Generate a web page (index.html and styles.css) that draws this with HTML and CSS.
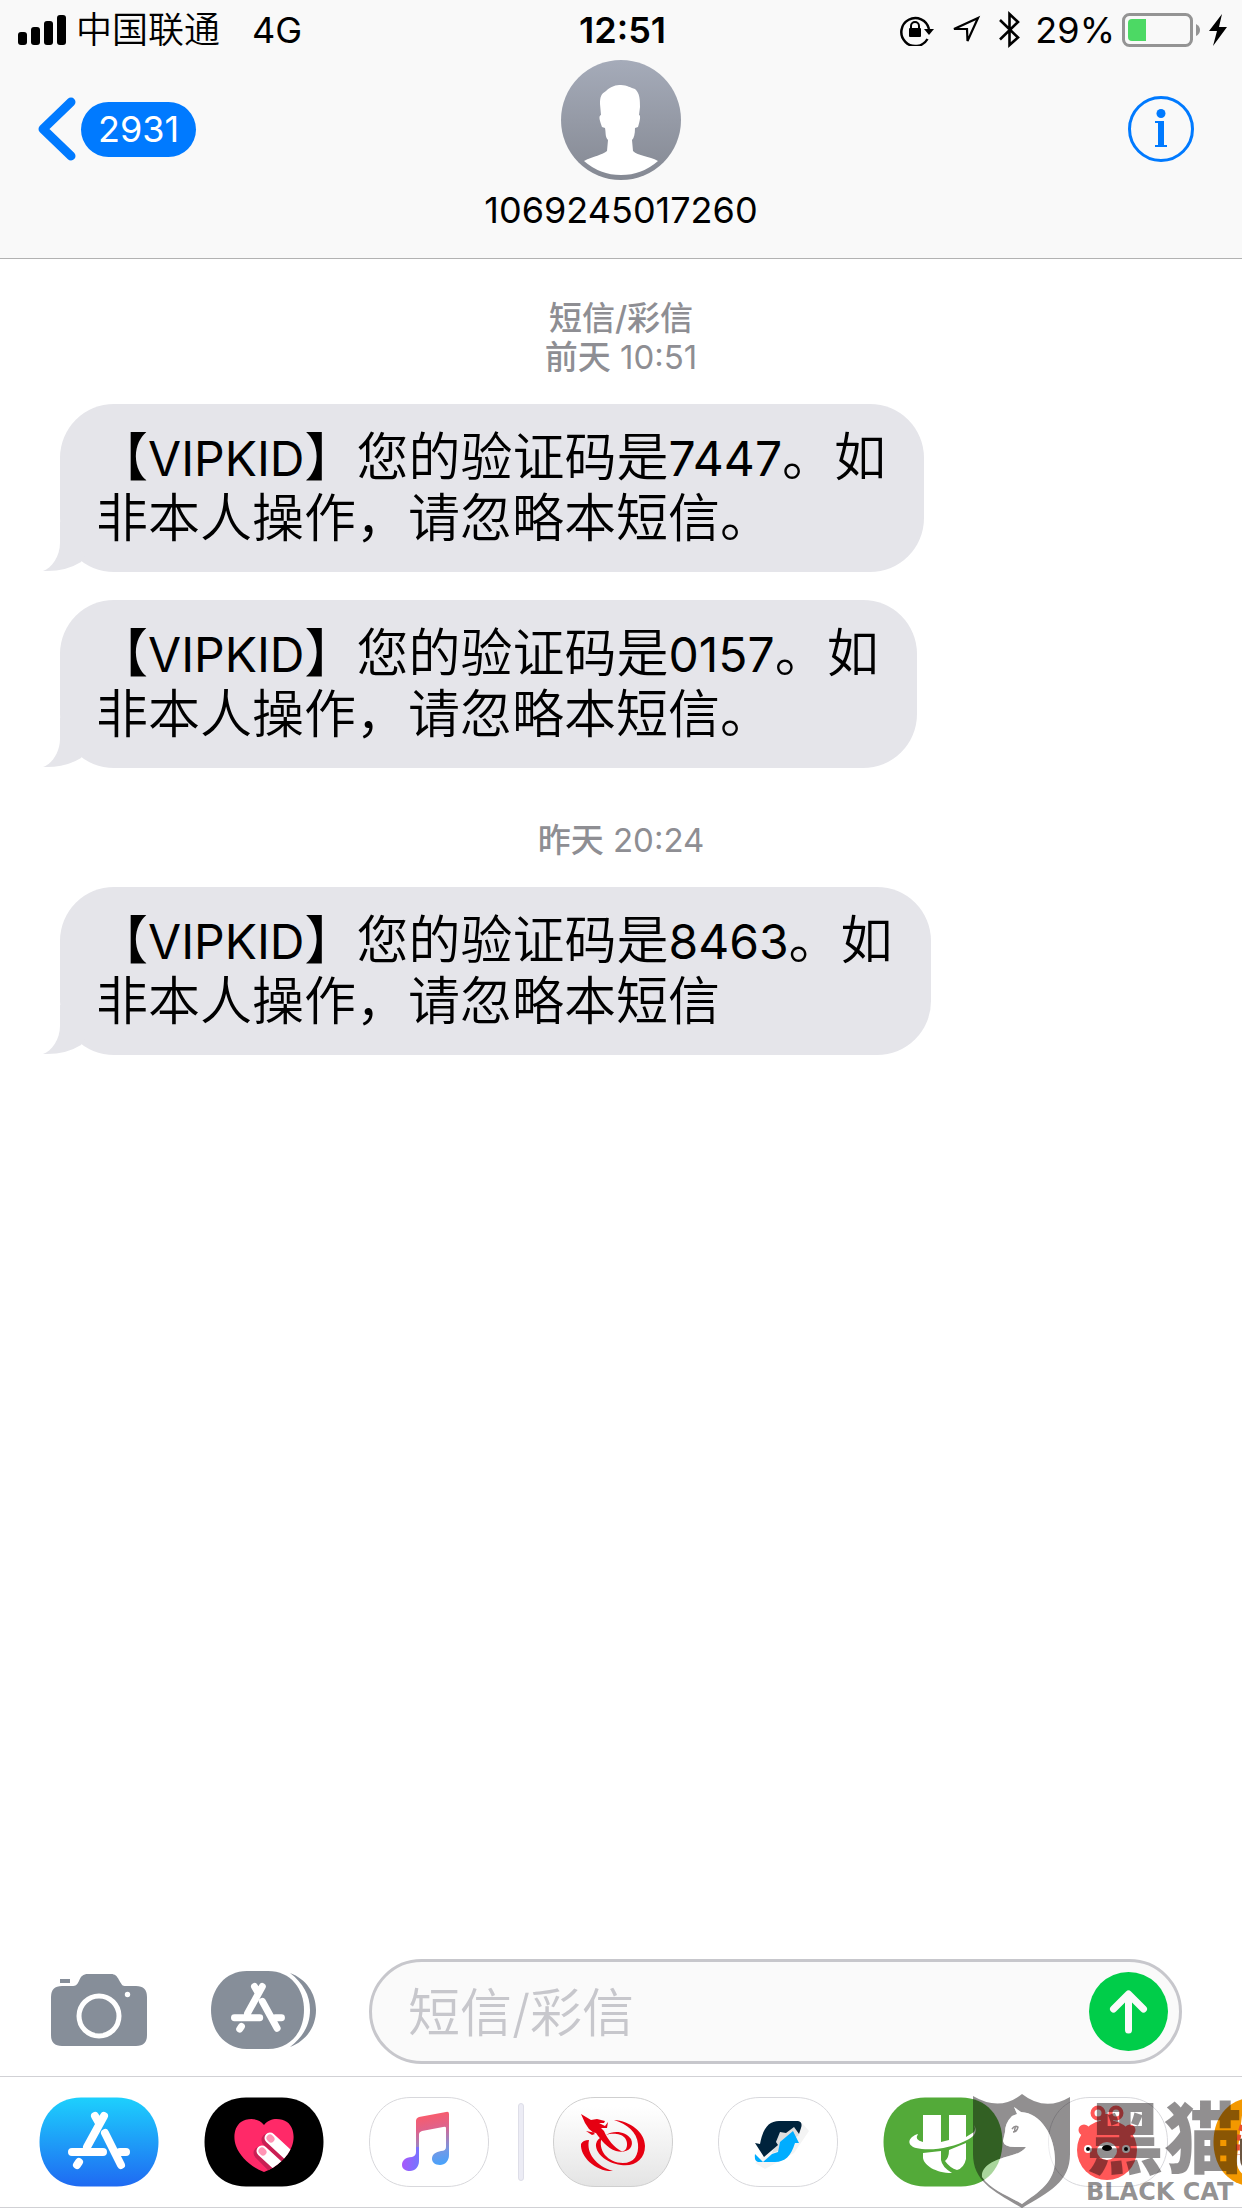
FILE: index.html
```html
<!DOCTYPE html>
<html lang="zh-CN">
<head>
    <meta charset="UTF-8">
    <meta name="viewport" content="width=device-width, initial-scale=1.0">
    <title>1069245017260</title>
    <link rel="stylesheet" href="styles.css">
</head>
<body>
    <header class="header">
        <div class="status-bar">
            <div class="status-left">
                <svg width="48" height="30" viewBox="0 0 48 30" aria-hidden="true">
                    <rect x="0" y="17" width="9" height="13" rx="3"/>
                    <rect x="13" y="12" width="9" height="18" rx="3"/>
                    <rect x="26" y="6" width="9" height="24" rx="3"/>
                    <rect x="39" y="0" width="9" height="30" rx="3"/>
                </svg>
                <span class="carrier">中国联通</span>
                <span class="network">4G</span>
            </div>
            <time class="clock">12:51</time>
            <div class="status-right">
                <!-- Rotation lock -->
                <svg width="36" height="32" viewBox="0 0 36 32" aria-hidden="true">
                    <path d="M27.500 25A14 14 0 1 1 29 15" fill="none" stroke="#000" stroke-width="2.500"/>
                    <path d="M24 15h10l-5 6z"/>
                    <rect x="9" y="14" width="12" height="9" rx="1"/>
                    <path d="M11 15v-3a4 4 0 0 1 8 0v3" fill="none" stroke="#000" stroke-width="2"/>
                </svg>
                <!-- Location -->
                <svg class="location" width="30" height="32" viewBox="0 0 30 32" aria-hidden="true">
                    <path d="M3 15L27 4L16.500 27L16 15Z" fill="none" stroke="#000" stroke-width="2.200"/>
                </svg>
                <!-- Bluetooth -->
                <svg width="22" height="38" viewBox="0 0 22 38" aria-hidden="true">
                    <path d="M1 9L19 26.500L10.500 34V3L19 11L1 28.500" fill="none" stroke="#000" stroke-width="2.600"/>
                </svg>
                <span class="percent">29%</span>
                <svg width="78" height="34" viewBox="0 0 78 34" aria-hidden="true">
                    <rect x="1.500" y="1.500" width="68" height="31" rx="6" fill="none" stroke="#949494" stroke-width="3"/>
                    <path d="M24 6H10a4 4 0 0 0-4 4v14a4 4 0 0 0 4 4h14z" fill="#4cd964"/>
                    <path d="M74 11q4 2 4 6t-4 6z" fill="#949494"/>
                </svg>
                <svg class="bolt" width="18" height="32" viewBox="0 0 18 32" aria-hidden="true">
                    <path d="M13 0L0 17h8L4 32L18 13h-8z"/>
                </svg>
            </div>
        </div>

        <nav class="nav-bar">
            <a class="back" href="#" aria-label="返回 2931">
                <svg width="38" height="64" viewBox="0 0 38 64" aria-hidden="true">
                    <path d="M33 5L5 32L33 59" fill="none" stroke="#007aff" stroke-width="9" stroke-linecap="round" stroke-linejoin="round"/>
                </svg>
                <span class="unread">2931</span>
            </a>
            <div class="contact">
                <svg width="120" height="120" viewBox="0 0 120 120" aria-hidden="true">
                    <defs>
                        <linearGradient id="avatarFill" x1="0" y1="0" x2="0" y2="1">
                            <stop offset="0" stop-color="#a5abb9"/>
                            <stop offset="1" stop-color="#858993"/>
                        </linearGradient>
                    </defs>
                    <circle cx="60" cy="60" r="60" fill="url(#avatarFill)"/>
                    <path d="M60 25C66 25 70 28 74 29C79 33 79 41 79 47L78 55C80 55 79 61 77 67L74 68C74 74 73 78 71 80L72 91C77 96 88 96 97 101Q81 115 60 115Q39 115 23 101C32 96 42 95 46 91L47 80C44 77 45 73 44 68L41 67C39 61 37 56 40 55L39 44C39 37 40 34 45 31C50 26 55 25 60 25Z" fill="#fff"/>
                </svg>
                <h1 class="contact-name">1069245017260</h1>
            </div>
            <button class="info" type="button" aria-label="详细信息">
                <svg width="66" height="66" viewBox="0 0 66 66" aria-hidden="true">
                    <circle cx="33" cy="33" r="31.500" fill="none" stroke="#007aff" stroke-width="3"/>
                    <circle cx="33" cy="17.500" r="4.500" fill="#007aff"/>
                    <path d="M27 25h9v24h3v2H27v-2h3V27h-3z" fill="#007aff"/>
                </svg>
            </button>
        </nav>
    </header>

    <main class="messages">
        <p class="timestamp"><strong>短信/彩信</strong><br><strong>前天</strong> 10:51</p>
        <div class="bubble">
            【<span class="latin">VIPKID</span>】您的验证码是<span class="latin">7447</span>。如<br>非本人操作，请忽略本短信。
            <svg class="tail" width="44" height="50" viewBox="0 0 44 50" aria-hidden="true"><path d="M17 0V21C17 34 9 46 0 49Q22 50 38 40L44 30V0Z"/></svg>
        </div>
        <div class="bubble">
            【<span class="latin">VIPKID</span>】您的验证码是<span class="latin">0157</span>。如<br>非本人操作，请忽略本短信。
            <svg class="tail" width="44" height="50" viewBox="0 0 44 50" aria-hidden="true"><path d="M17 0V21C17 34 9 46 0 49Q22 50 38 40L44 30V0Z"/></svg>
        </div>
        <p class="timestamp"><strong>昨天</strong> 20:24</p>
        <div class="bubble">
            【<span class="latin">VIPKID</span>】您的验证码是<span class="latin">8463</span>。如<br>非本人操作，请忽略本短信
            <svg class="tail" width="44" height="50" viewBox="0 0 44 50" aria-hidden="true"><path d="M17 0V21C17 34 9 46 0 49Q22 50 38 40L44 30V0Z"/></svg>
        </div>
    </main>

    <footer class="footer">
        <form class="composer">
            <div class="tools">
                <button type="button" aria-label="相机">
                    <svg width="96" height="72" viewBox="0 0 96 72" aria-hidden="true">
                        <path d="M9 5h10v4H9z" fill="#868e99"/>
                        <path d="M11 12H21C25 12 26 11 28 7C30 2 32 0 37 0H60C64 0 66 2 68 6C71 11 71 12 75 12H85Q96 12 96 23V61Q96 72 85 72H11Q0 72 0 61V23Q0 12 11 12Z" fill="#868e99"/>
                        <circle cx="48" cy="42" r="20" fill="none" stroke="#fff" stroke-width="5"/>
                        <circle cx="76.500" cy="20.500" r="2.700" fill="#fff"/>
                    </svg>
                </button>
                <button type="button" aria-label="App">
                    <svg width="105" height="78" viewBox="0 0 105 78" aria-hidden="true">
                        <path d="M36 0H57C80 0 93 18 93 39S80 78 57 78H36C14 78 0 60 0 39S14 0 36 0Z" fill="#868e99"/>
                        <path d="M79 2C95 8 105 22 105 39S95 70 79 76C92 66 99 54 99 39S92 12 79 2Z" fill="#868e99"/>
                        <g class="store-mark" transform="translate(20 12) scale(.87)">
                            <path d="M27 4L31 11M36 4L19 35M4 40H33M36 21L53 52M51 40H58M12 50L10 53"/>
                        </g>
                    </svg>
                </button>
            </div>
            <div class="field">
                <input type="text" placeholder="短信/彩信" aria-label="短信/彩信">
                <button type="submit" aria-label="发送">
                    <svg width="79" height="79" viewBox="0 0 79 79" aria-hidden="true">
                        <circle cx="39.500" cy="39.500" r="39.500" fill="#00cd49"/>
                        <path d="M24.500 37L39.500 22L54.500 37M39.500 23V58" fill="none" stroke="#fafafa" stroke-width="7" stroke-linecap="round" stroke-linejoin="round"/>
                    </svg>
                </button>
            </div>
        </form>

        <nav class="app-drawer">
            <svg width="0" height="0" class="defs" aria-hidden="true">
                <defs>
                    <path id="pill" d="M42 .5H78C104 .5 119.500 20 119.500 45S104 89.500 78 89.500H42C16 89.500 .5 70 .5 45S16 .5 42 .5Z"/>
                    <linearGradient id="storeFill" x1="0" y1="0" x2="0" y2="1">
                        <stop offset="0" stop-color="#1dd0fd"/>
                        <stop offset="1" stop-color="#1f6af2"/>
                    </linearGradient>
                    <linearGradient id="noteFill" gradientUnits="userSpaceOnUse" x1="50" y1="16" x2="62" y2="72">
                        <stop offset="0" stop-color="#ff5a64"/>
                        <stop offset=".3" stop-color="#e0628a"/>
                        <stop offset=".75" stop-color="#6f9ae8"/>
                        <stop offset="1" stop-color="#41a4ff"/>
                    </linearGradient>
                    <linearGradient id="noteLeft" gradientUnits="userSpaceOnUse" x1="34" y1="66" x2="50" y2="68">
                        <stop offset="0" stop-color="#a659fb"/>
                        <stop offset="1" stop-color="#7276ff"/>
                    </linearGradient>
                    <linearGradient id="silver" x1="0" y1="0" x2="0" y2="1">
                        <stop offset=".1" stop-color="#fff"/>
                        <stop offset="1" stop-color="#e4e4e4"/>
                    </linearGradient>
                </defs>
            </svg>
            <div class="app-group">
                <a href="#" aria-label="App Store">
                    <svg width="120" height="90" viewBox="0 0 120 90">
                        <use href="#pill" fill="url(#storeFill)"/>
                        <g class="store-mark" transform="translate(29 15)">
                            <path d="M27 4L31 11M36 4L19 35M4 40H35M37 21L53 53M52 40H58M11 50L9 53"/>
                        </g>
                    </svg>
                </a>
                <a href="#" aria-label="Digital Touch">
                    <svg width="120" height="90" viewBox="0 0 120 90">
                        <use href="#pill"/>
                        <path id="heart" d="M60 28C54 20 43 21 37 25C30 30 29 41 32 49C36 60 47 70 60 75C73 70 84 60 88 49C91 41 90 30 83 25C77 21 66 20 60 28Z" fill="#ff2968"/>
                        <clipPath id="heartClip"><use href="#heart"/></clipPath>
                        <g clip-path="url(#heartClip)" stroke-linecap="round" fill="none">
                            <path d="M56 56L76 76M64 43L94 71" stroke="#c91f54" stroke-width="13"/>
                            <path d="M58 54L82 76M66 41L94 67" stroke="#fff" stroke-width="11"/>
                            <path d="M58 54L59 55M66 41L67 42" stroke="#ff95b5" stroke-width="7"/>
                        </g>
                    </svg>
                </a>
                <a href="#" aria-label="音乐">
                    <svg width="120" height="90" viewBox="0 0 120 90">
                        <use href="#pill" fill="#fff" stroke="#d8d8dc"/>
                        <path d="M47 24Q47 21 50 20L77 15Q80 14 80 17V58C80 64 76 68 71 68C66 68 63 65 63 62C63 57 67 55 72 54Q77 54 77 50V31Q77 29 74 30L53 34Q50 35 50 37V62H47Z" fill="url(#noteFill)"/>
                        <path d="M47 50V55Q47 59 43 60C36 60 33 64 33 68C33 72 37 74 41 74C46 74 50 70 50 64V50Z" fill="url(#noteLeft)"/>
                    </svg>
                </a>
            </div>
            <span class="divider"></span>
            <div class="app-group">
                <a href="#" aria-label="艺龙">
                    <svg width="120" height="90" viewBox="0 0 120 90">
                        <use href="#pill" fill="url(#silver)" stroke="#cfcfcf"/>
                        <g fill="#e60012">
                            <path d="M28 17L38 23L44 22L52 24L51 26L46 26L52 29L55 25L54 31L48 31L51 34C54 42 62 51 68 54C74 56 76 46 72 41C68 36 58 36 53 38C60 33 73 34 78 42C82 51 73 57 63 54C54 51 48 43 43 36L33 34L39 38L42 37L36 32L32 26Z"/>
                            <path d="M61 23C77 24 92 35 92 49C92 62 82 70 68 68C52 66 42 55 43 47C44 43 46 41 49 40C44 53 55 66 70 66C81 66 86 58 85 47C84 35 74 27 61 23Z"/>
                            <path d="M28 47Q30 43 36 43C33 56 43 69 60 74C43 75 27 60 28 47Z"/>
                        </g>
                    </svg>
                </a>
                <a href="#" aria-label="转换">
                    <svg width="120" height="90" viewBox="0 0 120 90">
                        <use href="#pill" fill="#fff" stroke="#d8d8dc"/>
                        <path d="M37 66L84 26L91 34L76 56L47 72Z" fill="#f4f4f4"/>
                        <path d="M58 46L61 35H68L75 28L81 38L60 54L54 56Z" fill="#dedede"/>
                        <path d="M37 46L42 47C45 31 51 24 61 24H80Q85 25 83 31L81 37L76 30L68 36L62 35L58 45L60 48L46 60Z" fill="#00233c"/>
                        <path d="M37 57L45 65L54 57L60 55L62 45L75 34L81 46L77 46C73 59 67 65 57 65H40Q36 64 37 57Z" fill="#00adff"/>
                    </svg>
                </a>
                <a href="#" aria-label="U">
                    <svg width="120" height="90" viewBox="0 0 120 90">
                        <use href="#pill" fill="#53aa39"/>
                        <path d="M40 18H58V45L66 43V18H83V40L91 35Q93 32 91 28Q96 36 86 42C68 52 46 54 33 51C23 48 25 40 35 37Q31 43 40 45Z" fill="#fff"/>
                        <path d="M40 56L58 54V63Q59 70 69 76C52 76 41 68 40 61ZM83 46V62Q81 71 74 73Q67 71 62 64Q66 61 66 53Z" fill="#fff"/>
                    </svg>
                </a>
                <a href="#" aria-label="小熊">
                    <svg width="120" height="90" viewBox="0 0 120 90">
                        <use href="#pill" fill="#fff" stroke="#d8d8dc"/>
                        <g fill="#ff5757">
                            <circle cx="59" cy="53" r="30"/>
                            <circle cx="36" cy="33" r="5.500"/>
                            <circle cx="82" cy="33" r="5.500"/>
                            <path d="M53 17h12v10H53z"/>
                        </g>
                        <circle cx="50" cy="16" r="5.500" fill="#fff" stroke="#ff5757" stroke-width="4"/>
                        <circle cx="68" cy="16" r="5.500" fill="#fff" stroke="#ff5757" stroke-width="4"/>
                        <ellipse cx="59" cy="54" rx="10" ry="9" fill="#fff"/>
                        <ellipse cx="59" cy="51" rx="5" ry="3"/>
                        <circle cx="40" cy="52" r="3" stroke="#fff" stroke-width="2"/>
                        <circle cx="78" cy="52" r="3" stroke="#fff" stroke-width="2"/>
                    </svg>
                </a>
                <a href="#" aria-label="更多">
                    <svg width="120" height="90" viewBox="0 0 120 90">
                        <use href="#pill" fill="#f39800"/>
                        <path d="M30 10H120V80H36Q22 76 24 60Z" fill="#fff"/>
                        <path d="M29 28Q24 42 25 58" fill="none" stroke="#e8502a" stroke-width="4" stroke-dasharray="6 4"/>
                        <path d="M27 42L40 38V76Q27 72 27 62Z" fill="#6b5540"/>
                    </svg>
                </a>
            </div>
        </nav>
    </footer>

    <div class="watermark">
        <svg width="98" height="114" viewBox="0 0 98 114" aria-hidden="true">
            <path fill-rule="evenodd" d="M0 2Q27 18 49 0Q72 18 97 3V60C97 88 76 98 49 114C22 98 0 88 0 60ZM41 13L44 20L39 22Q32 29 32 38L30 47Q31 53 42 53L53 53Q49 59 36 62C21 66 8 72 9 83C18 96 34 101 49 110C66 98 82 88 82 66C82 42 68 19 48 18Z" fill="#0c0608" fill-opacity=".45"/>
            <path d="M41 13L44 20L39 22Q32 29 32 38L30 47Q31 53 42 53L53 53Q49 59 36 62C21 66 8 72 9 83C18 96 34 101 49 110C66 98 82 88 82 66C82 42 68 19 48 18Z" fill="#fff" fill-opacity=".5"/>
            <path d="M39 35Q42 31 45 33Q44 38 40 38M43 33Q41 35 42 37" fill="none" stroke="#918e8f" stroke-width="1.500"/>
        </svg>
        <div class="watermark-text">
            <span class="watermark-cn">黑猫</span>
            <span class="watermark-en">BLACK CAT</span>
        </div>
    </div>
</body>
</html>
```
FILE: styles.css
```css
* {
    box-sizing: border-box;
    margin: 0;
    padding: 0;
}

body {
    position: relative;
    display: flex;
    flex-direction: column;
    min-height: 100vh;
    overflow-x: hidden;
    background-color: #fff;
    color: #000;
    font-family: Inter, "Noto Sans CJK SC", sans-serif;
    font-size: 36px;
}

svg {
    display: block;
    flex-shrink: 0;
}

button {
    border: none;
    background: none;
    cursor: pointer;
}

a {
    color: inherit;
    text-decoration: none;
}

/* Header */
.header {
    background-color: #f9f9f9;
    border-bottom: 1px solid #b2b2b2;
}

.status-bar,
.nav-bar {
    display: grid;
    grid-template-columns: 1fr auto 1fr;
}

.status-bar {
    align-items: center;
    height: 60px;
    padding: 0 15px 0 18px;
    line-height: 60px;
}

.status-left,
.status-right {
    display: flex;
    align-items: center;
}

.carrier {
    margin-left: 10px;
    font-weight: 350;
}

.network {
    margin-left: 32px;
}

.clock {
    font-weight: 600;
}

.status-right {
    justify-content: flex-end;
}

.location {
    margin: 0 18px 0 15px;
}

.percent {
    margin: 0 7px 0 14px;
}

.bolt {
    margin-left: 9px;
}

.nav-bar {
    align-items: start;
    height: 198px;
    padding: 0 38px;
}

.back {
    display: flex;
    align-items: center;
    gap: 5px;
    padding-top: 37px;
}

.unread {
    padding: 0 17px;
    border-radius: 28px;
    background-color: #007aff;
    color: #fff;
    line-height: 55px;
}

.contact {
    display: flex;
    flex-direction: column;
    align-items: center;
}

.contact-name {
    font-size: 36px;
    font-weight: 400;
    line-height: 60px;
}

.info {
    justify-self: end;
    padding: 36px 10px 0 0;
}

/* Messages */
.messages {
    flex: 1;
    display: flex;
    flex-direction: column;
    align-items: flex-start;
    padding: 40px 60px;
}

.timestamp {
    align-self: center;
    margin-bottom: 27px;
    color: #8e8e93;
    font-size: 33px;
    line-height: 39px;
    text-align: center;
}

.timestamp strong {
    font-weight: 500;
}

.bubble {
    position: relative;
    margin-bottom: 28px;
    padding: 23px 38px 23px 36px;
    border-radius: 54px;
    background-color: #e5e5ea;
    font-size: 52px;
    font-weight: 350;
    line-height: 61px;
}

.bubble + .timestamp {
    margin-top: 25px;
}

/* Latin letters and digits run large next to the Chinese text */
.latin {
    font-size: 48px;
    font-weight: 400;
    line-height: 1;
}

.tail {
    position: absolute;
    bottom: 0;
    left: -17px;
    fill: #e5e5ea;
}

/* Message box */
.composer {
    display: flex;
    align-items: center;
    gap: 53px;
    padding: 0 60px 12px 51px;
}

.tools {
    display: flex;
    align-items: center;
    gap: 64px;
    padding-bottom: 3px;
}

.store-mark {
    fill: none;
    stroke: #fff;
    stroke-width: 8;
    stroke-linecap: round;
}

.field {
    flex: 1;
    display: flex;
    align-items: center;
    min-width: 0;
    height: 105px;
    padding: 0 11px 0 36px;
    border: 3px solid #c7c7cc;
    border-radius: 53px;
    background-color: #fafafa;
}

.field input {
    flex: 1;
    min-width: 0;
    padding-top: 4px;
    border: none;
    outline: none;
    background: none;
    font-family: inherit;
    font-size: 52px;
    font-weight: 350;
}

.field input::placeholder {
    color: #c7c7cc;
    opacity: 1;
}

/* App drawer */
.app-drawer {
    display: flex;
    align-items: center;
    gap: 29px;
    height: 132px;
    padding-left: 39px;
    overflow: hidden;
    border-top: 1px solid #d1d1d5;
    border-bottom: 1px solid #d1d1d5;
}

.defs {
    position: absolute;
}

.app-group {
    display: flex;
    gap: 45px;
}

.divider {
    flex-shrink: 0;
    width: 6px;
    height: 78px;
    border: 1px solid #dedee8;
    border-radius: 3px;
    background-color: #ececf5;
}

/* Watermark */
.watermark {
    position: absolute;
    right: 0;
    bottom: 0;
    display: flex;
    align-items: flex-end;
    gap: 15px;
    pointer-events: none;
}

.watermark-text {
    display: flex;
    flex-direction: column;
    color: rgba(12, 6, 8, 0.45);
    white-space: nowrap;
}

.watermark-cn {
    font-family: "Noto Sans CJK SC", sans-serif;
    font-size: 78px;
    font-weight: 900;
    line-height: 86px;
}

.watermark-en {
    font-family: "DejaVu Sans", sans-serif;
    font-size: 24px;
    font-weight: 700;
    line-height: 31px;
}
```
